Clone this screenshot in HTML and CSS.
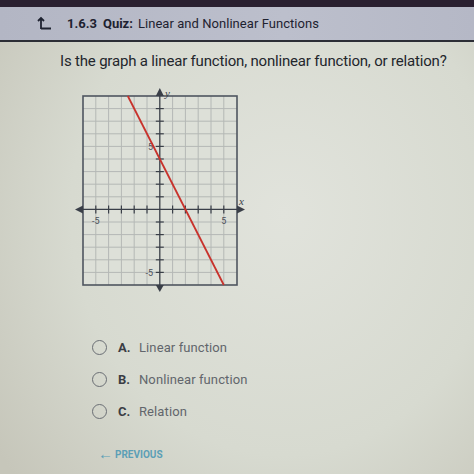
FILE: index.html
```html
<!DOCTYPE html>
<html>
<head>
<meta charset="utf-8">
<link rel="stylesheet" href="styles.css">
</head>
<body>
<div class="screen">
  <div class="topstrip"></div>
  <header class="header">
    <svg class="back-icon" width="16" height="14" viewBox="0 0 16 14">
      <path d="M4 13 V2 M1 5 L4 2 L7 5 M4 12.5 H14" fill="none" stroke="#1e2230" stroke-width="1.8"/>
    </svg>
    <span class="num">1.6.3</span>
    <span class="quiz">Quiz:</span>
    <span class="title">Linear and Nonlinear Functions</span>
  </header>
  <main class="main">
    <p class="question">Is the graph a linear function, nonlinear function, or relation?</p>
    <div class="graph">
      <svg width="180" height="205" viewBox="0 0 180 205">
        <rect x="7" y="7" width="154" height="189" fill="#dde0d8"/>
        <g stroke="#b4b8b6" stroke-width="1">
          <line x1="19.8" y1="7" x2="19.8" y2="196"/>
          <line x1="32.6" y1="7" x2="32.6" y2="196"/>
          <line x1="45.4" y1="7" x2="45.4" y2="196"/>
          <line x1="58.2" y1="7" x2="58.2" y2="196"/>
          <line x1="71" y1="7" x2="71" y2="196"/>
          <line x1="96.6" y1="7" x2="96.6" y2="196"/>
          <line x1="109.4" y1="7" x2="109.4" y2="196"/>
          <line x1="122.2" y1="7" x2="122.2" y2="196"/>
          <line x1="135" y1="7" x2="135" y2="196"/>
          <line x1="147.8" y1="7" x2="147.8" y2="196"/>
          <line x1="7" y1="19.6" x2="161" y2="19.6"/>
          <line x1="7" y1="32.2" x2="161" y2="32.2"/>
          <line x1="7" y1="44.8" x2="161" y2="44.8"/>
          <line x1="7" y1="57.4" x2="161" y2="57.4"/>
          <line x1="7" y1="70" x2="161" y2="70"/>
          <line x1="7" y1="82.6" x2="161" y2="82.6"/>
          <line x1="7" y1="95.2" x2="161" y2="95.2"/>
          <line x1="7" y1="107.8" x2="161" y2="107.8"/>
          <line x1="7" y1="133" x2="161" y2="133"/>
          <line x1="7" y1="145.6" x2="161" y2="145.6"/>
          <line x1="7" y1="158.2" x2="161" y2="158.2"/>
          <line x1="7" y1="170.8" x2="161" y2="170.8"/>
          <line x1="7" y1="183.4" x2="161" y2="183.4"/>
        </g>
        <rect x="7" y="7" width="154" height="189" fill="none" stroke="#4f5560" stroke-width="1.6"/>
        <g stroke="#3a3f48" stroke-width="1.3">
          <line x1="3" y1="120.4" x2="165" y2="120.4"/>
          <line x1="83.8" y1="2" x2="83.8" y2="200"/>
        </g>
        <g fill="#3a3f48">
          <polygon points="-1,120.4 7,116.4 7,124.4"/>
          <polygon points="169,120.4 161,116.4 161,124.4"/>
          <polygon points="83.8,-1 79.8,7 87.8,7"/>
          <polygon points="83.8,203 79.8,196 87.8,196"/>
        </g>
        <g stroke="#3a3f48" stroke-width="1.2">
          <line x1="19.8" y1="116.4" x2="19.8" y2="124.4"/>
          <line x1="32.6" y1="116.4" x2="32.6" y2="124.4"/>
          <line x1="45.4" y1="116.4" x2="45.4" y2="124.4"/>
          <line x1="58.2" y1="116.4" x2="58.2" y2="124.4"/>
          <line x1="71" y1="116.4" x2="71" y2="124.4"/>
          <line x1="96.6" y1="116.4" x2="96.6" y2="124.4"/>
          <line x1="109.4" y1="116.4" x2="109.4" y2="124.4"/>
          <line x1="122.2" y1="116.4" x2="122.2" y2="124.4"/>
          <line x1="135" y1="116.4" x2="135" y2="124.4"/>
          <line x1="147.8" y1="116.4" x2="147.8" y2="124.4"/>
          <line x1="79.8" y1="19.6" x2="87.8" y2="19.6"/>
          <line x1="79.8" y1="32.2" x2="87.8" y2="32.2"/>
          <line x1="79.8" y1="44.8" x2="87.8" y2="44.8"/>
          <line x1="79.8" y1="57.4" x2="87.8" y2="57.4"/>
          <line x1="79.8" y1="70" x2="87.8" y2="70"/>
          <line x1="79.8" y1="82.6" x2="87.8" y2="82.6"/>
          <line x1="79.8" y1="95.2" x2="87.8" y2="95.2"/>
          <line x1="79.8" y1="107.8" x2="87.8" y2="107.8"/>
          <line x1="79.8" y1="133" x2="87.8" y2="133"/>
          <line x1="79.8" y1="145.6" x2="87.8" y2="145.6"/>
          <line x1="79.8" y1="158.2" x2="87.8" y2="158.2"/>
          <line x1="79.8" y1="170.8" x2="87.8" y2="170.8"/>
          <line x1="79.8" y1="183.4" x2="87.8" y2="183.4"/>
        </g>
        <g class="axis-label">
          <text x="19.8" y="135" text-anchor="middle">-5</text>
          <text x="147.8" y="135" text-anchor="middle">5</text>
          <text x="77" y="60.5" text-anchor="end">5</text>
          <text x="77" y="186.5" text-anchor="end">-5</text>
        </g>
        <text class="axis-var" x="89" y="8">y</text>
        <text class="axis-var" x="163" y="116">x</text>
        <line x1="51.8" y1="7" x2="147.8" y2="196" stroke="#c8322c" stroke-width="1.8"/>
      </svg>
    </div>
    <ul class="options">
      <li class="option"><span class="radio"></span><span class="letter">A.</span><span class="label">Linear function</span></li>
      <li class="option"><span class="radio"></span><span class="letter">B.</span><span class="label">Nonlinear function</span></li>
      <li class="option"><span class="radio"></span><span class="letter">C.</span><span class="label">Relation</span></li>
    </ul>
    <div class="previous"><span class="arrow">&larr;</span>PREVIOUS</div>
  </main>
</div>
</body>
</html>
```
FILE: styles.css
```css
html, body {
  margin: 0;
  padding: 0;
}
body {
  width: 474px;
  height: 474px;
  overflow: hidden;
  font-family: Roboto, "Liberation Sans", sans-serif;
}
.screen {
  width: 474px;
  height: 474px;
  display: flex;
  flex-direction: column;
  background: radial-gradient(ellipse 75% 85% at 60% 45%, #e1e3dc 0%, #d7dad0 60%, #c6c6ba 100%);
}
.topstrip {
  height: 7px;
  background: #2a2030;
}
.header {
  box-sizing: border-box;
  height: 35px;
  background: linear-gradient(to right, #b3b6c4, #bcbfcc 60%, #b5b8c6);
  border-bottom: 2px solid #2c2e36;
  display: flex;
  align-items: center;
  padding-left: 37px;
  color: #1e2230;
  font-size: 13px;
}
.back-icon {
  margin-right: 14px;
  margin-top: -1px;
}
.num {
  font-weight: 700;
  margin-right: 6px;
}
.quiz {
  font-weight: 700;
  margin-right: 5px;
}
.title {
  font-weight: 400;
  letter-spacing: 0.05px;
}
.main {
  flex: 1;
  padding-left: 60px;
}
.question {
  margin: 10px 0 0 0;
  font-size: 15px;
  color: #23262c;
  letter-spacing: -0.18px;
  line-height: 18px;
}
.graph {
  margin: 19px 0 0 16px;
  height: 205px;
}
.graph svg {
  display: block;
  overflow: visible;
}
.axis-label {
  font-family: Roboto, "Liberation Sans", sans-serif;
  font-size: 9px;
  fill: #4a4f58;
}
.axis-var {
  font-family: "Liberation Serif", serif;
  font-style: italic;
  font-size: 11px;
  fill: #3a3f48;
}
.options {
  list-style: none;
  margin: 37px 0 0 0;
  padding: 0 0 0 32px;
}
.option {
  display: flex;
  align-items: center;
  height: 32px;
  font-size: 13px;
}
.radio {
  box-sizing: border-box;
  width: 15px;
  height: 15px;
  border: 1.6px solid #6a6e74;
  border-radius: 50%;
  margin-right: 11px;
  flex: none;
}
.letter {
  font-weight: 700;
  color: #3a3d44;
  width: 21px;
}
.label {
  color: #62666c;
  letter-spacing: 0.1px;
}
.previous {
  margin: 18px 0 0 38px;
  color: #5c9fb6;
  font-size: 10px;
  font-weight: 700;
  display: flex;
  align-items: center;
}
.arrow {
  font-size: 15px;
  font-weight: 400;
  margin-right: 2px;
}
```
